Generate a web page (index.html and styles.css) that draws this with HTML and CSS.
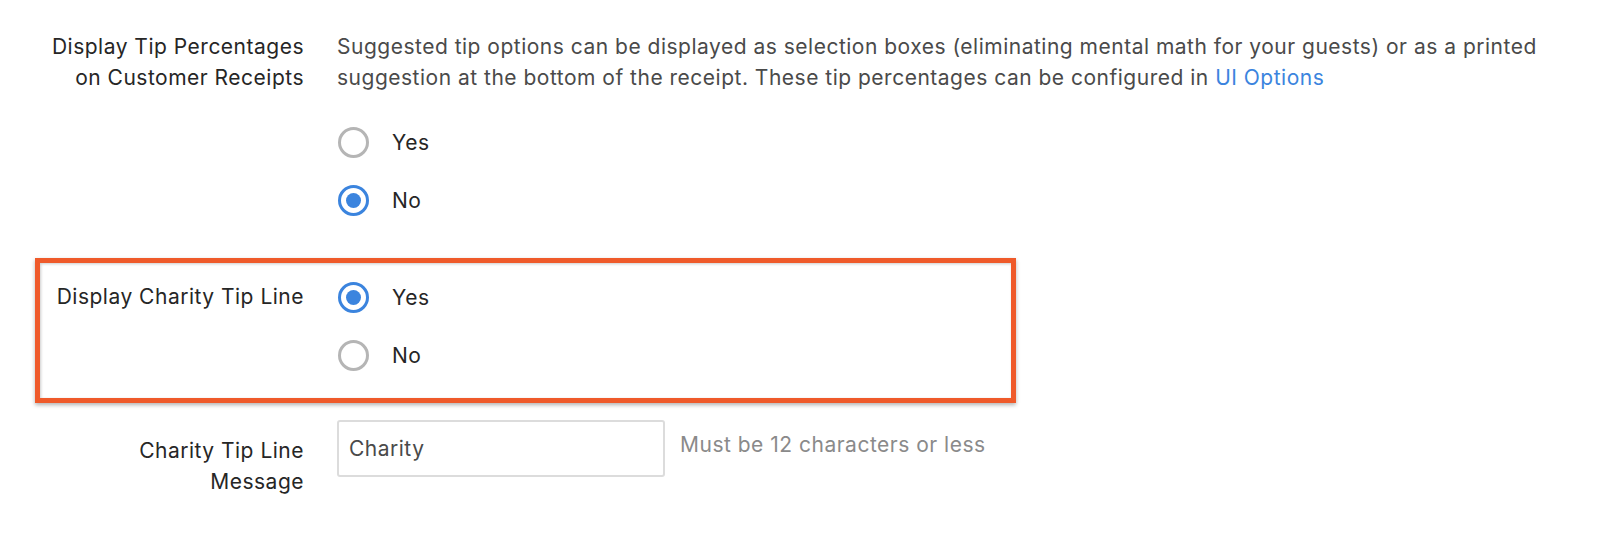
FILE: index.html
```html
<!DOCTYPE html>
<html lang="en">
<head>
    <meta charset="UTF-8">
    <meta name="viewport" content="width=device-width, initial-scale=1.0">
    <title>Receipt Settings</title>
    <link rel="stylesheet" href="styles.css">
</head>
<body>

    <div class="settings">
        <!-- Tip percentages -->
        <div class="setting-row">
            <div class="setting-label">Display Tip Percentages on Customer Receipts</div>
            <div class="setting-control">
                <p class="description">Suggested tip options can be displayed as selection boxes (eliminating mental math for your guests) or as a printed suggestion at the bottom of the receipt. These tip percentages can be configured in <a href="#">UI Options</a></p>
                <div class="options">
                    <label class="option"><input type="radio" name="tip-pct" value="yes"><span>Yes</span></label>
                    <label class="option"><input type="radio" name="tip-pct" value="no" checked><span>No</span></label>
                </div>
            </div>
        </div>

        <!-- Charity tip line -->
        <div class="setting-row highlight">
            <div class="setting-label">Display Charity Tip Line</div>
            <div class="setting-control">
                <div class="options">
                    <label class="option"><input type="radio" name="charity" value="yes" checked><span>Yes</span></label>
                    <label class="option"><input type="radio" name="charity" value="no"><span>No</span></label>
                </div>
            </div>
        </div>

        <!-- Charity message -->
        <div class="setting-row message-row">
            <div class="setting-label">Charity Tip Line Message</div>
            <div class="setting-control inline">
                <input type="text" class="text-input" value="Charity" maxlength="12">
                <span class="hint">Must be 12 characters or less</span>
            </div>
        </div>
    </div>

</body>
</html>
```

FILE: styles.css
```css
body {
    font-family: Inter, "Noto Sans", sans-serif;
    font-size: 21px;
    line-height: 31px;
    letter-spacing: 0.5px;
    color: #262626;
    background-color: #ffffff;
    margin: 0;
}
.settings {
    padding: 31px 40px 0 51px;
}
.setting-row {
    display: grid;
    grid-template-columns: 253px 1fr;
    column-gap: 33px;
}
.setting-label {
    text-align: right;
    color: #262626;
}
.description {
    margin: 0 0 20px 0;
    color: #4a4a4a;
}
.description a {
    color: #3b84de;
    text-decoration: none;
}
.options {
    display: flex;
    flex-direction: column;
}
.option {
    display: flex;
    align-items: center;
    height: 58px;
    cursor: pointer;
}
.option input {
    appearance: none;
    -webkit-appearance: none;
    width: 31px;
    height: 31px;
    margin: 0 23px 0 1px;
    border: 3px solid #b5b5b5;
    border-radius: 50%;
    box-sizing: border-box;
    display: flex;
    align-items: center;
    justify-content: center;
    cursor: pointer;
}
.option input:checked {
    border-color: #3b84de;
}
.option input:checked::after {
    content: "";
    width: 15px;
    height: 15px;
    border-radius: 50%;
    background-color: #3b84de;
}
.setting-row.highlight {
    width: 981px;
    box-sizing: border-box;
    margin: 29px 0 0 -16px;
    padding: 5px 0 14px 11px;
    border: 5px solid #ef5a2a;
    box-shadow: 0 2px 4px rgba(0, 0, 0, 0.3), inset 1px 1px 3px rgba(0, 0, 0, 0.2);
}
.highlight .setting-label {
    padding-top: 13px; /* line up with the first radio */
}
.message-row {
    margin-top: 17px;
}
.message-row .setting-label {
    padding-top: 15px;
}
.setting-control.inline {
    display: flex;
    align-items: flex-start;
}
.text-input {
    width: 328px;
    height: 57px;
    box-sizing: border-box;
    padding: 0 10px;
    border: 2px solid #dcdcdc;
    border-radius: 3px;
    font-family: inherit;
    font-size: 21px;
    letter-spacing: 0.5px;
    color: #4a4a4a;
}
.hint {
    margin: 9px 0 0 15px;
    color: #8a8a8a;
}
```
